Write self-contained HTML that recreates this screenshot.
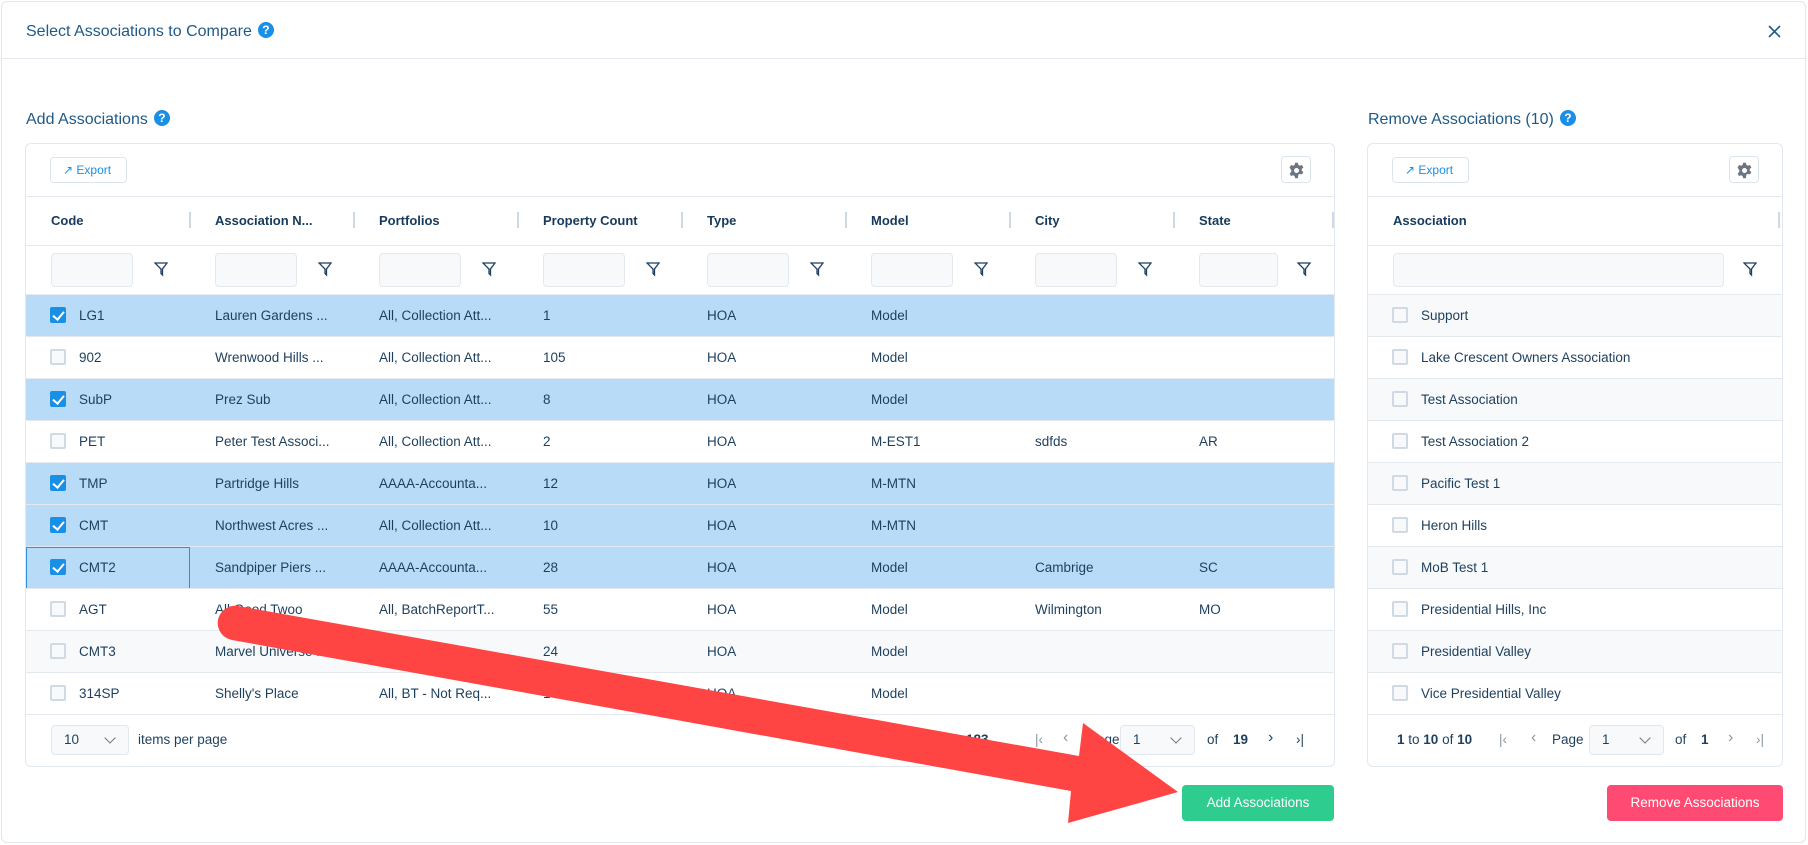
<!DOCTYPE html>
<html><head><meta charset="utf-8"><style>
*{box-sizing:border-box;margin:0;padding:0}
body{width:1808px;height:845px;background:#fff;font-family:"Liberation Sans",sans-serif;color:#1d3f5e;font-size:13.5px;overflow:hidden;position:relative}
.modal{position:absolute;left:1px;top:1px;width:1805px;height:842px;background:#fff;border-radius:6px;border:1px solid #dfe6ec}
.a{position:absolute;white-space:nowrap}
.hdrline{position:absolute;left:0;top:56px;width:100%;height:1px;background:#e3e9ef}
.q{display:inline-block;width:16px;height:16px;border-radius:50%;background:#1a8fe6;color:#fff;font-size:12px;font-weight:bold;text-align:center;line-height:16px;vertical-align:2px;margin-left:6px}
.panel{position:absolute;top:143px;height:624px;border:1px solid #e1e8ef;border-radius:6px;background:#fff;overflow:hidden}
.btn{position:absolute;border:1px solid #dde5ec;border-radius:4px;background:#fff}
.exp{left:24px;top:13px;width:77px;height:26px;color:#1a8fe6;font-size:12px;line-height:24px;padding-left:12px}
.gear{top:12px;width:30px;height:27px}
.gear svg{position:absolute;left:6px;top:5px}
.hline{position:absolute;left:0;width:100%;height:1px;background:#e3e9ef}
.th{position:absolute;top:52px;height:49px;line-height:49px;font-weight:bold;font-size:13px;color:#173a5c}
.sep{position:absolute;top:68px;width:2px;height:16px;background:#cdd9e4}
.inp{position:absolute;top:109px;height:34px;border:1px solid #e3e9ef;border-radius:4px;background:#f7f9fb}
.fn{position:absolute;top:117px;width:14px;height:16px}
.row{position:absolute;left:0;width:100%;height:42px;border-top:1px solid #e3e9ef;font-size:13.5px;line-height:41px;color:#1d3f5e}
.row span{position:absolute;white-space:nowrap}
.g{background:#f7f9fb}.s{background:#b8dcf7}
.cb{position:absolute;left:24px;top:12px;width:16px;height:16px;border:2px solid #d0dae4;border-radius:2px;background:#f7f9fb}
.cb.on{background:#1a8fe6;border-color:#1a8fe6}
.cb.on:after{content:"";position:absolute;left:3px;top:0px;width:5px;height:9px;border:solid #fff;border-width:0 2px 2px 0;transform:rotate(40deg)}
.sel{position:absolute;height:30px;border:1px solid #e1e8ef;border-radius:4px;background:#f7f9fb;font-size:13.5px;line-height:28px;padding-left:12px}
.sel:after{content:"";position:absolute;right:14px;top:8px;width:7px;height:7px;border:solid #6b7680;border-width:0 1.5px 1.5px 0;transform:rotate(45deg)}
.pg{position:absolute;top:588px;font-size:13.5px;color:#1d3f5e}
.gray{color:#8a96a3}
</style></head><body>
<div class="modal">
<div class="a" style="left:24px;top:20px;font-size:16px;color:#1f5a87">Select Associations to Compare<span class="q">?</span></div>
<svg class="a" style="left:1766px;top:23px" width="13" height="13"><path d="M1 1L12 12M12 1L1 12" stroke="#1f5a87" stroke-width="1.6"/></svg>
<div class="hdrline"></div>
<div class="a" style="left:24px;top:108px;font-size:16px;color:#1f5a87">Add Associations<span class="q">?</span></div>
<div class="a" style="left:1366px;top:108px;font-size:16px;color:#1f5a87">Remove Associations (10)<span class="q">?</span></div>
</div>

<div class="panel" style="left:25px;width:1310px">
 <div class="btn exp">&#x2197;&#xFE0E; Export</div>
 <div class="btn gear" style="left:1255px"><svg width="17" height="17" viewBox="0 0 24 24"><path fill="#6b7680" fill-rule="evenodd" d="M10 1h4l.6 3.1a8 8 0 0 1 2.1 1.2l3-1 2 3.4-2.4 2.1a8 8 0 0 1 0 2.4l2.4 2.1-2 3.4-3-1a8 8 0 0 1-2.1 1.2L14 23h-4l-.6-3.1a8 8 0 0 1-2.1-1.2l-3 1-2-3.4 2.4-2.1a8 8 0 0 1 0-2.4L2.3 7.7l2-3.4 3 1a8 8 0 0 1 2.1-1.2zM12 8.5a3.5 3.5 0 1 0 0 7 3.5 3.5 0 0 0 0-7z"/></svg></div>
 <div class="hline" style="top:52px"></div><div class="hline" style="top:101px"></div>
 <div class="th" style="left:25px">Code</div><div class="sep" style="left:163px"></div>
 <div class="th" style="left:189px">Association N...</div><div class="sep" style="left:327px"></div>
 <div class="th" style="left:353px">Portfolios</div><div class="sep" style="left:491px"></div>
 <div class="th" style="left:517px">Property Count</div><div class="sep" style="left:655px"></div>
 <div class="th" style="left:681px">Type</div><div class="sep" style="left:819px"></div>
 <div class="th" style="left:845px">Model</div><div class="sep" style="left:983px"></div>
 <div class="th" style="left:1009px">City</div><div class="sep" style="left:1147px"></div>
 <div class="th" style="left:1173px">State</div><div class="sep" style="left:1306px"></div>
 <div class="inp" style="left:25px;width:82px"></div><svg class="fn" style="left:128px" viewBox="0 0 14 16"><path d="M1 2H13L8.5 8V14L7 12.5V8Z" fill="none" stroke="#1d3f5e" stroke-width="1.3"/></svg>
 <div class="inp" style="left:189px;width:82px"></div><svg class="fn" style="left:292px" viewBox="0 0 14 16"><path d="M1 2H13L8.5 8V14L7 12.5V8Z" fill="none" stroke="#1d3f5e" stroke-width="1.3"/></svg>
 <div class="inp" style="left:353px;width:82px"></div><svg class="fn" style="left:456px" viewBox="0 0 14 16"><path d="M1 2H13L8.5 8V14L7 12.5V8Z" fill="none" stroke="#1d3f5e" stroke-width="1.3"/></svg>
 <div class="inp" style="left:517px;width:82px"></div><svg class="fn" style="left:620px" viewBox="0 0 14 16"><path d="M1 2H13L8.5 8V14L7 12.5V8Z" fill="none" stroke="#1d3f5e" stroke-width="1.3"/></svg>
 <div class="inp" style="left:681px;width:82px"></div><svg class="fn" style="left:784px" viewBox="0 0 14 16"><path d="M1 2H13L8.5 8V14L7 12.5V8Z" fill="none" stroke="#1d3f5e" stroke-width="1.3"/></svg>
 <div class="inp" style="left:845px;width:82px"></div><svg class="fn" style="left:948px" viewBox="0 0 14 16"><path d="M1 2H13L8.5 8V14L7 12.5V8Z" fill="none" stroke="#1d3f5e" stroke-width="1.3"/></svg>
 <div class="inp" style="left:1009px;width:82px"></div><svg class="fn" style="left:1112px" viewBox="0 0 14 16"><path d="M1 2H13L8.5 8V14L7 12.5V8Z" fill="none" stroke="#1d3f5e" stroke-width="1.3"/></svg>
 <div class="inp" style="left:1173px;width:79px"></div><svg class="fn" style="left:1271px" viewBox="0 0 14 16"><path d="M1 2H13L8.5 8V14L7 12.5V8Z" fill="none" stroke="#1d3f5e" stroke-width="1.3"/></svg>

 <div class="row s" style="top:150px"><i class="cb on"></i><span style="left:53px">LG1</span><span style="left:189px">Lauren Gardens ...</span><span style="left:353px">All, Collection Att...</span><span style="left:517px">1</span><span style="left:681px">HOA</span><span style="left:845px">Model</span></div>
 <div class="row" style="top:192px"><i class="cb"></i><span style="left:53px">902</span><span style="left:189px">Wrenwood Hills ...</span><span style="left:353px">All, Collection Att...</span><span style="left:517px">105</span><span style="left:681px">HOA</span><span style="left:845px">Model</span></div>
 <div class="row s" style="top:234px"><i class="cb on"></i><span style="left:53px">SubP</span><span style="left:189px">Prez Sub</span><span style="left:353px">All, Collection Att...</span><span style="left:517px">8</span><span style="left:681px">HOA</span><span style="left:845px">Model</span></div>
 <div class="row" style="top:276px"><i class="cb"></i><span style="left:53px">PET</span><span style="left:189px">Peter Test Associ...</span><span style="left:353px">All, Collection Att...</span><span style="left:517px">2</span><span style="left:681px">HOA</span><span style="left:845px">M-EST1</span><span style="left:1009px">sdfds</span><span style="left:1173px">AR</span></div>
 <div class="row s" style="top:318px"><i class="cb on"></i><span style="left:53px">TMP</span><span style="left:189px">Partridge Hills</span><span style="left:353px">AAAA-Accounta...</span><span style="left:517px">12</span><span style="left:681px">HOA</span><span style="left:845px">M-MTN</span></div>
 <div class="row s" style="top:360px"><i class="cb on"></i><span style="left:53px">CMT</span><span style="left:189px">Northwest Acres ...</span><span style="left:353px">All, Collection Att...</span><span style="left:517px">10</span><span style="left:681px">HOA</span><span style="left:845px">M-MTN</span></div>
 <div class="row s" style="top:402px"><div style="position:absolute;left:0;top:0;width:164px;height:42px;border:1px solid #2a8fe0"></div><i class="cb on"></i><span style="left:53px">CMT2</span><span style="left:189px">Sandpiper Piers ...</span><span style="left:353px">AAAA-Accounta...</span><span style="left:517px">28</span><span style="left:681px">HOA</span><span style="left:845px">Model</span><span style="left:1009px">Cambrige</span><span style="left:1173px">SC</span></div>
 <div class="row" style="top:444px"><i class="cb"></i><span style="left:53px">AGT</span><span style="left:189px">All Good Twoo</span><span style="left:353px">All, BatchReportT...</span><span style="left:517px">55</span><span style="left:681px">HOA</span><span style="left:845px">Model</span><span style="left:1009px">Wilmington</span><span style="left:1173px">MO</span></div>
 <div class="row g" style="top:486px"><i class="cb"></i><span style="left:53px">CMT3</span><span style="left:189px">Marvel Universe ...</span><span style="left:517px">24</span><span style="left:681px">HOA</span><span style="left:845px">Model</span></div>
 <div class="row" style="top:528px"><i class="cb"></i><span style="left:53px">314SP</span><span style="left:189px">Shelly's Place</span><span style="left:353px">All, BT - Not Req...</span><span style="left:517px">1</span><span style="left:681px">HOA</span><span style="left:845px">Model</span></div>
 <div class="hline" style="top:570px"></div>
 <div class="sel" style="left:25px;top:581px;width:78px">10</div>
 <div class="pg" style="left:112px">items per page</div>
 <div class="pg" style="left:940px"><b>183</b></div>
 <div class="pg gray" style="left:1009px">|&lsaquo;</div><div class="pg gray" style="left:1037px;font-size:16px;top:585px">&lsaquo;</div>
 <div class="pg" style="left:1062px">Page</div>
 <div class="sel" style="left:1094px;top:581px;width:75px">1</div>
 <div class="pg" style="left:1181px">of</div><div class="pg" style="left:1207px"><b>19</b></div>
 <div class="pg" style="left:1242px;font-size:16px;top:585px">&rsaquo;</div><div class="pg" style="left:1270px">&rsaquo;|</div>
</div>

<div class="panel" style="left:1367px;width:416px">
 <div class="btn exp">&#x2197;&#xFE0E; Export</div>
 <div class="btn gear" style="left:361px"><svg width="17" height="17" viewBox="0 0 24 24"><path fill="#6b7680" fill-rule="evenodd" d="M10 1h4l.6 3.1a8 8 0 0 1 2.1 1.2l3-1 2 3.4-2.4 2.1a8 8 0 0 1 0 2.4l2.4 2.1-2 3.4-3-1a8 8 0 0 1-2.1 1.2L14 23h-4l-.6-3.1a8 8 0 0 1-2.1-1.2l-3 1-2-3.4 2.4-2.1a8 8 0 0 1 0-2.4L2.3 7.7l2-3.4 3 1a8 8 0 0 1 2.1-1.2zM12 8.5a3.5 3.5 0 1 0 0 7 3.5 3.5 0 0 0 0-7z"/></svg></div>
 <div class="hline" style="top:52px"></div><div class="hline" style="top:101px"></div>
 <div class="th" style="left:25px">Association</div><div class="sep" style="left:410px"></div>
 <div class="inp" style="left:25px;width:331px"></div><svg class="fn" style="left:375px" viewBox="0 0 14 16"><path d="M1 2H13L8.5 8V14L7 12.5V8Z" fill="none" stroke="#1d3f5e" stroke-width="1.3"/></svg>
 <div class="row g" style="top:150px"><i class="cb"></i><span style="left:53px">Support</span></div>
 <div class="row" style="top:192px"><i class="cb"></i><span style="left:53px">Lake Crescent Owners Association</span></div>
 <div class="row g" style="top:234px"><i class="cb"></i><span style="left:53px">Test Association</span></div>
 <div class="row" style="top:276px"><i class="cb"></i><span style="left:53px">Test Association 2</span></div>
 <div class="row g" style="top:318px"><i class="cb"></i><span style="left:53px">Pacific Test 1</span></div>
 <div class="row" style="top:360px"><i class="cb"></i><span style="left:53px">Heron Hills</span></div>
 <div class="row g" style="top:402px"><i class="cb"></i><span style="left:53px">MoB Test 1</span></div>
 <div class="row" style="top:444px"><i class="cb"></i><span style="left:53px">Presidential Hills, Inc</span></div>
 <div class="row g" style="top:486px"><i class="cb"></i><span style="left:53px">Presidential Valley</span></div>
 <div class="row" style="top:528px"><i class="cb"></i><span style="left:53px">Vice Presidential Valley</span></div>
 <div class="hline" style="top:570px"></div>
 <div class="pg" style="left:29px"><b>1</b> to <b>10</b> of <b>10</b></div>
 <div class="pg gray" style="left:131px">|&lsaquo;</div><div class="pg gray" style="left:163px;font-size:16px;top:585px">&lsaquo;</div>
 <div class="pg" style="left:184px">Page</div>
 <div class="sel" style="left:221px;top:581px;width:75px">1</div>
 <div class="pg" style="left:307px">of</div><div class="pg" style="left:333px"><b>1</b></div>
 <div class="pg gray" style="left:360px;font-size:16px;top:585px">&rsaquo;</div><div class="pg gray" style="left:388px">&rsaquo;|</div>
</div>

<div class="a" style="left:1182px;top:785px;width:152px;height:36px;background:#2ecc8f;border-radius:4px;color:#fff;font-size:13.5px;text-align:center;line-height:36px">Add Associations</div>
<div class="a" style="left:1607px;top:785px;width:176px;height:36px;background:#ff4b73;border-radius:4px;color:#fff;font-size:13.5px;text-align:center;line-height:36px">Remove Associations</div>

<svg class="a" style="left:0;top:0" width="1808" height="845">
<path d="M238 606 L1079 756 L1083 723 L1178 792 L1068 823 L1071 791 L232 640 A17 17 0 0 1 238 606 Z" fill="#ff4444"/>
</svg>
</body></html>
